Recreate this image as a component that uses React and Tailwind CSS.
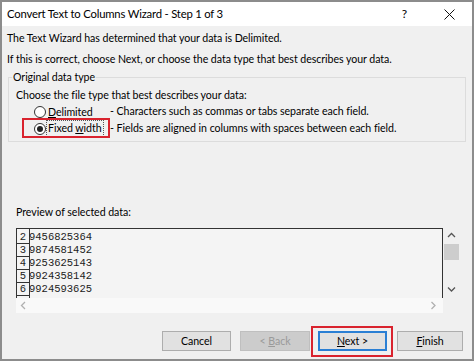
import React from 'react';

const rows = [
    ['2', '9456825364'],
    ['3', '9874581452'],
    ['4', '9253625143'],
    ['5', '9924358142'],
    ['6', '9924593625'],
];

const Radio = ({ checked }) => (
    <span className="w-[12px] h-[12px] rounded-full border border-[#333] bg-white flex items-center justify-center shrink-0">
        {checked && <span className="w-[6px] h-[6px] rounded-full bg-[#222]" />}
    </span>
);

const Chevron = ({ dir, color }) => {
    const d = {
        up: 'M1 5 L4.5 1.5 L8 5',
        down: 'M1 1.5 L4.5 5 L8 1.5',
        left: 'M5 1 L1.5 4.5 L5 8',
        right: 'M1.5 1 L5 4.5 L1.5 8',
    }[dir];
    return (
        <svg width="9" height="9" viewBox="0 0 9 9" className="block">
            <path d={d} fill="none" stroke={color} strokeWidth="1.3" />
        </svg>
    );
};

export default function App() {
    return (
        <div className="w-[474px] h-[361px] border-2 border-[#8c8c8c] bg-[#f0f0f0] flex flex-col overflow-hidden font-['Lato',sans-serif] text-[10.6px] tracking-[-0.05px] text-black">
            {/* Title bar */}
            <div className="h-[24px] bg-white flex items-center shrink-0">
                <span className="ml-[5px] text-[11.3px] tracking-[-0.2px] leading-[16px]">
                    Convert Text to Columns Wizard - Step 1 of 3
                </span>
                <span className="ml-auto text-[12px] leading-[16px]">?</span>
                <svg width="11" height="11" viewBox="0 0 11 11" className="ml-[37px] mr-[17px]">
                    <path d="M0.5 0.5 L10.5 10.5 M10.5 0.5 L0.5 10.5" stroke="#111" strokeWidth="1" />
                </svg>
            </div>

            {/* Intro text */}
            <div className="ml-[5px] mt-[4px] leading-[16px]">
                The Text Wizard has determined that your data is Delimited.
            </div>
            <div className="ml-[5px] mt-[5px] leading-[16px]">
                If this is correct, choose Next, or choose the data type that best describes your data.
            </div>

            {/* Original data type */}
            <fieldset className="mx-[6px] mt-[2px] h-[73px] border border-[#dcdcdc] p-0">
                <legend className="ml-[3px] px-[1px] leading-[16px]">Original data type</legend>
                <div className="ml-[7px] mt-[2px] leading-[16px]">
                    Choose the file type that best describes your data:
                </div>
                <div className="ml-[13px] flex items-center h-[17px]">
                    <div className="w-[88px] flex items-center pl-[12px]">
                        <Radio />
                        <span className="ml-[2px] leading-[16px]">
                            <span className="underline">D</span>elimited
                        </span>
                    </div>
                    <span>- Characters such as commas or tabs separate each field.</span>
                </div>
                <div className="ml-[13px] flex items-center h-[17px]">
                    <div className="w-[88px] flex items-center pl-[12px] relative">
                        <span className="absolute left-0 top-[-2px] w-[88px] h-[20px] border-2 border-[#d9232e]" />
                        <Radio checked />
                        <span className="px-[1px] leading-[15px] border border-dotted border-[#555]">
                            Fixed <span className="underline">w</span>idth
                        </span>
                    </div>
                    <span>- Fields are aligned in columns with spaces between each field.</span>
                </div>
            </fieldset>

            {/* Preview */}
            <div className="ml-[14px] mt-[62px] leading-[16px]">Preview of selected data:</div>
            <div className="ml-[14px] mt-[8px] grid grid-cols-[427px_16px] grid-rows-[70px_15px]">
                <div className="border-t border-l border-r border-[#333] bg-[#f4f4f4] overflow-hidden flex font-['Liberation_Mono',monospace] text-[10.5px] tracking-normal leading-[13px]">
                    <div className="w-[13px] border-r border-[#333] pt-[2px] shrink-0">
                        {rows.map(([n]) => (
                            <div key={n} className="h-[13px] border-b border-[#333] text-center text-[#222]">
                                {n}
                            </div>
                        ))}
                    </div>
                    <div className="pt-[2px] text-[#222] -ml-[1px]">
                        {rows.map(([n, v]) => (
                            <div key={n} className="h-[13px]">{v}</div>
                        ))}
                    </div>
                </div>
                <div className="flex flex-col items-center">
                    <div className="mt-[4px]"><Chevron dir="up" color="#555" /></div>
                    <div className="mt-[3px] w-[15px] h-[16px] bg-[#cdcdcd]" />
                    <div className="mt-auto mb-[3px]"><Chevron dir="down" color="#555" /></div>
                </div>
                <div className="bg-[#f9f9f9] flex items-center justify-between px-[4px]">
                    <Chevron dir="left" color="#b0b0b0" />
                    <Chevron dir="right" color="#b0b0b0" />
                </div>
                <div />
            </div>

            {/* Buttons */}
            <div className="mt-[18px] pl-[160px] flex items-center">
                <button className="w-[69px] h-[20px] border border-[#adadad] bg-[#e1e1e1] leading-[16px]">Cancel</button>
                <button className="ml-[9px] w-[70px] h-[20px] border border-[#bfbfbf] bg-[#cccccc] text-[#9a9a9a] leading-[16px]">
                    &lt; <span className="underline">B</span>ack
                </button>
                <div className="ml-[8px] relative">
                    <span className="absolute left-[-7px] top-[-5px] w-[82px] h-[31px] border-2 border-[#d9232e]" />
                    <button className="w-[69px] h-[20px] border-2 border-[#2a7fd4] bg-[#e1e1e1] leading-[16px]">
                        <span className="underline">N</span>ext &gt;
                    </button>
                </div>
                <button className="ml-[10px] w-[66px] h-[20px] border border-[#adadad] bg-[#e1e1e1] leading-[16px]">
                    <span className="underline">F</span>inish
                </button>
            </div>
        </div>
    );
}
